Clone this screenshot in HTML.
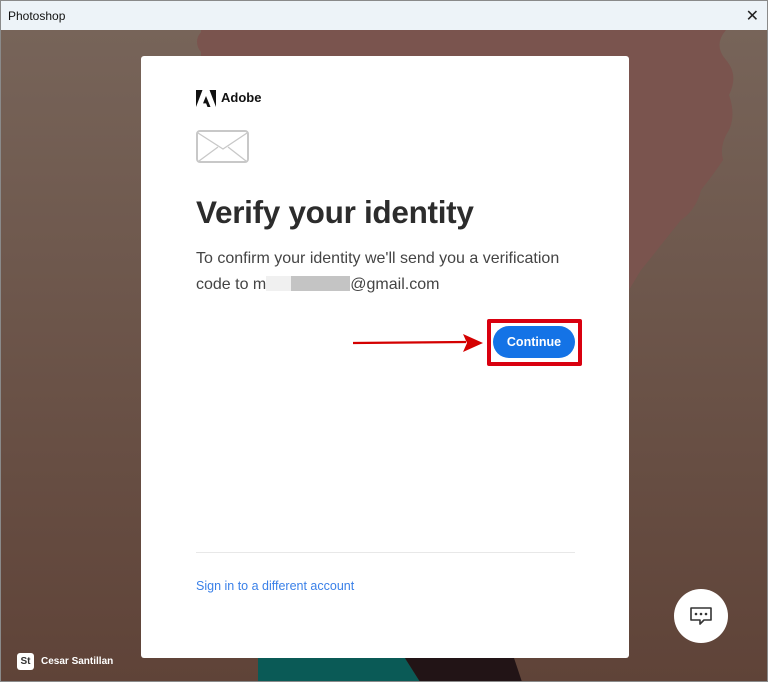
<!DOCTYPE html>
<html><head><meta charset="utf-8"><style>
*{margin:0;padding:0;box-sizing:border-box}
body{width:768px;height:682px;overflow:hidden;font-family:"Liberation Sans",sans-serif;background:#fff;position:relative}
.win{position:absolute;left:0;top:0;width:768px;height:682px;border:1px solid #8a8a8a;overflow:hidden}
.title{position:absolute;left:0;top:0;width:766px;height:29px;background:#edf3f8;font-size:12px;color:#111;padding:8px 0 0 7px}
.x{position:absolute;right:8px;top:5px;font-size:16px;color:#222}
.bg{position:absolute;left:0;top:29px;width:766px;height:652px;background:linear-gradient(#776459,#5f4338)}
.card{position:absolute;left:140px;top:55px;width:488px;height:602px;background:#fff;border-radius:3px}
.t{position:absolute;left:195px;color:#2c2c2c}
</style></head><body><div class="win">
<div class="title">Photoshop<span class="x">✕</span></div>
<div class="bg">
<svg width="766" height="652" style="position:absolute;left:0;top:0">
<path d="M215 0 L725 0 Q712 15 725 30 Q738 45 728 65 Q735 85 728 100 Q718 115 722 130 Q712 145 700 160 Q695 180 680 190 Q668 205 660 215 Q650 228 640 240 L628 260 L628 0 Z" fill="#7a544e"/>
<rect x="200" y="0" width="440" height="30" fill="#7a544e"/>
<circle cx="210" cy="12" r="14" fill="#7a544e"/>
<path d="M257 625 L402 625 L421 655 L257 655Z" fill="#0a5a56"/>
<path d="M402 625 L512 625 L522 655 L421 655Z" fill="#221416"/>
</svg>
<div style="position:absolute;left:16px;top:623px;width:17px;height:17px;background:#fff;border-radius:3px;font-size:10px;font-weight:bold;color:#333;text-align:center;line-height:17px">St</div>
<div style="position:absolute;left:40px;top:626px;font-size:10px;font-weight:bold;color:#fff">Cesar Santillan</div>
<div style="position:absolute;left:673px;top:559px;width:54px;height:54px;border-radius:50%;background:#fff">
<svg width="54" height="54"><path d="M17 19 h20 v12 h-7 l-4 4 v-4 h-9 z" fill="none" stroke="#333" stroke-width="1.6" stroke-linejoin="round"/><circle cx="22" cy="25" r="1.3" fill="#333"/><circle cx="27" cy="25" r="1.3" fill="#333"/><circle cx="32" cy="25" r="1.3" fill="#333"/></svg></div>
</div>
<div class="card"></div>
<svg style="position:absolute;left:195px;top:89px" width="20" height="17"><path d="M0 0h6.5L0 17z M13.5 0H20v17z M10 6l4.5 11h-3l-1.4-3.6H7z" fill="#111"/></svg>
<div class="t" style="left:220px;top:89px;font-size:13px;font-weight:bold;color:#111">Adobe</div>
<svg style="position:absolute;left:195px;top:129px" width="54" height="34"><rect x="1" y="1" width="51" height="31" rx="3" fill="none" stroke="#c8c8c8" stroke-width="2"/><path d="M2 3 L27 19 L51 3 M3 31 L22 17 M50 31 L32 17" fill="none" stroke="#c8c8c8" stroke-width="1.3"/></svg>
<div class="t" style="top:193px;font-size:31.5px;font-weight:bold;letter-spacing:-0.3px">Verify your identity</div>
<div class="t" style="top:245px;font-size:16px;color:#444;line-height:26px;width:400px">To confirm your identity we'll send you a verification<br>code to m<span style="display:inline-block;width:84px;height:15px;background:linear-gradient(90deg,#f0f0f0 0 30%,#c4c4c4 30%);vertical-align:-2px"></span>@gmail.com</div>
<svg style="position:absolute;left:350px;top:330px" width="135" height="24"><path d="M2 12 L115 11" stroke="#d40000" stroke-width="2.2"/><path d="M112 3 L132 12 L112 21 L116 12Z" fill="#d40000"/></svg>
<div style="position:absolute;left:486px;top:318px;width:95px;height:47px;border:4px solid #d9000f;border-radius:2px"></div>
<div style="position:absolute;left:492px;top:325px;width:82px;height:32px;border-radius:16px;background:#1473e6;color:#fff;font-size:12.5px;font-weight:bold;text-align:center;line-height:32px">Continue</div>
<div style="position:absolute;left:195px;top:551px;width:379px;height:1px;background:#e8e8e8"></div>
<div class="t" style="top:578px;font-size:12.5px;color:#3a80e8">Sign in to a different account</div>
</div></body></html>
